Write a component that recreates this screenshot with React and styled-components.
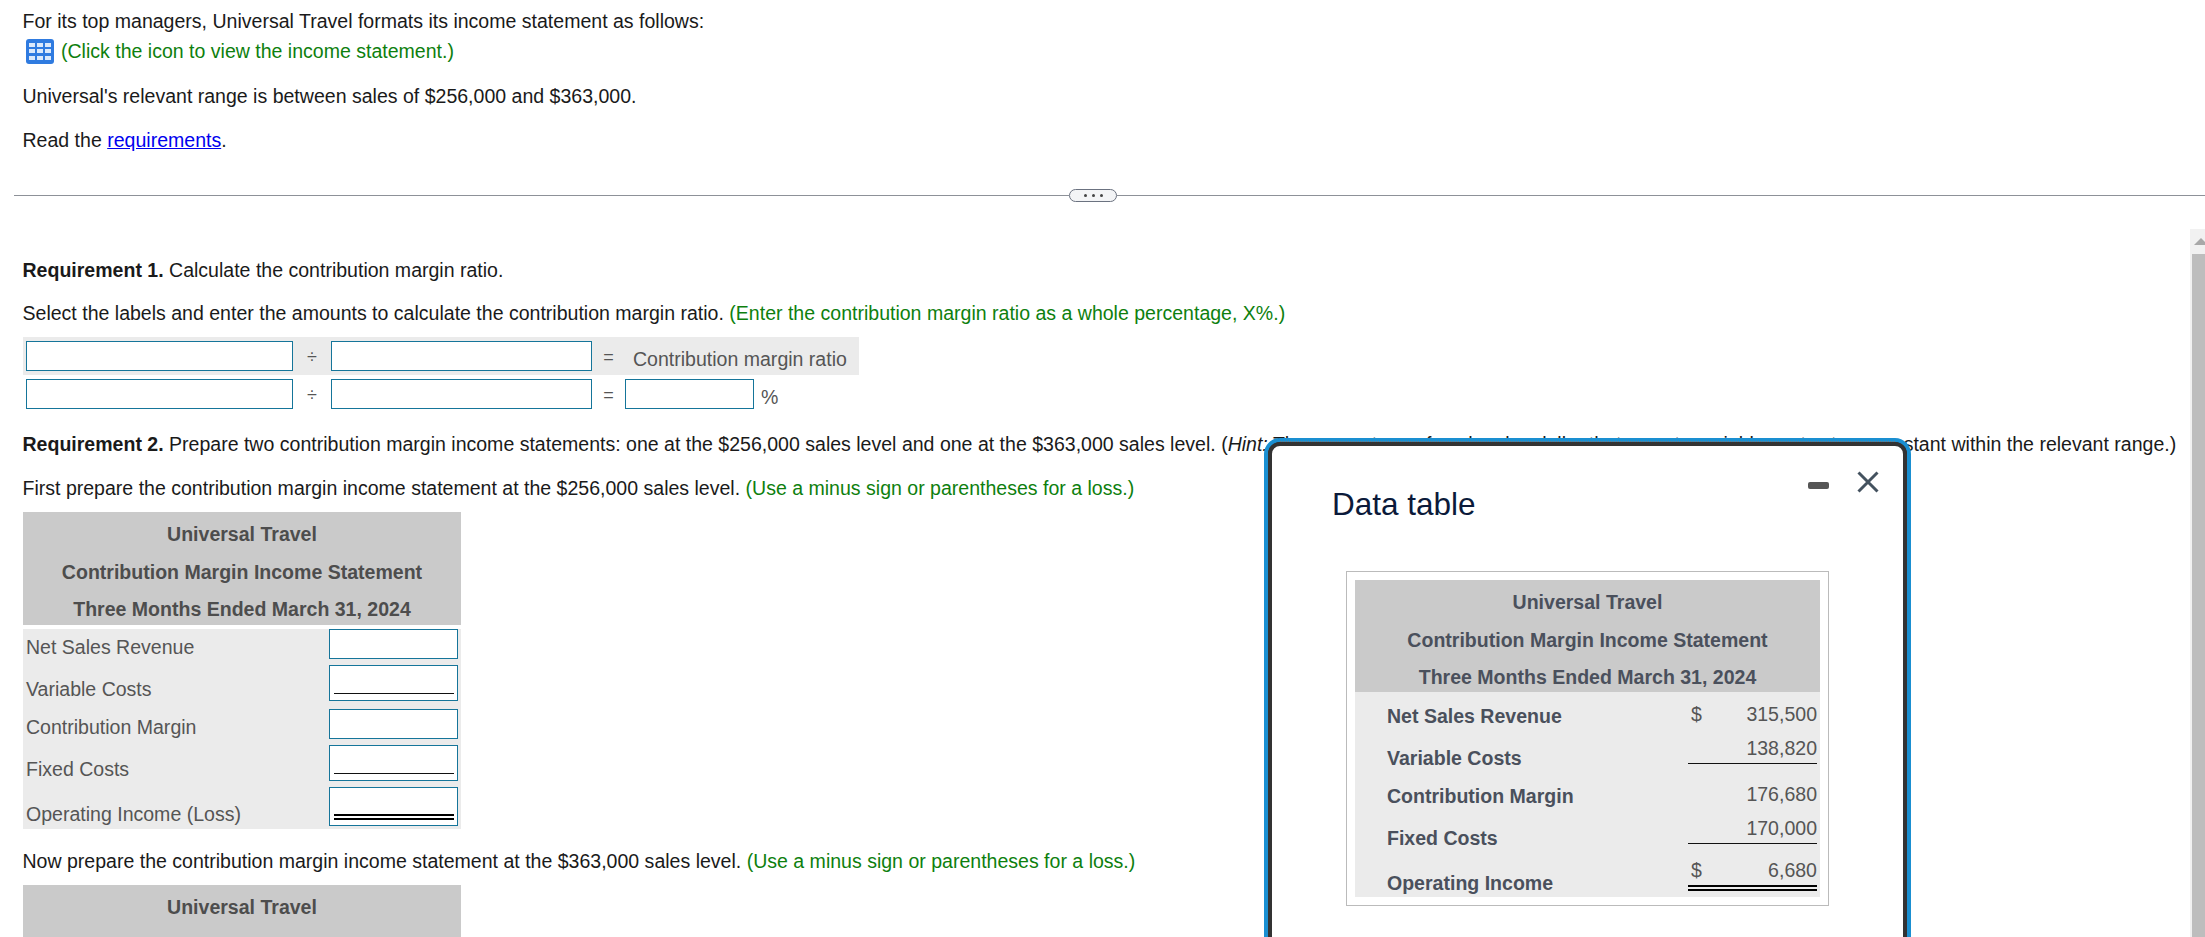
import React from 'react';
import styled, { createGlobalStyle } from 'styled-components';

const GlobalStyle = createGlobalStyle`
	html, body {
		margin: 0;
		padding: 0;
		background: #fff;
	}
	body {
		font-family: "Liberation Sans", Arial, sans-serif;
		font-size: 19.55px;
		color: #1a1a1a;
	}
`;

const Page = styled.div`
	position: relative;
	width: 2205px;
	height: 937px;
	overflow: hidden;
`;

const Intro = styled.section`
	padding: 6px 0 0 22.5px;
`;

const Line = styled.p`
	margin: ${(props) => props.$top || 0}px 0 0 ${(props) => props.$left || 0}px;
	line-height: 30px;
	white-space: nowrap;
`;

const IconLine = styled(Line)`
	display: flex;
	align-items: center;
	gap: 7px;
	padding-left: 3.5px;
`;

const Hint = styled.span`
	color: #0e7f0e;
`;

const Link = styled.a`
	color: #0000ee;
	text-decoration: underline;
`;

const Divider = styled.div`
	display: flex;
	align-items: center;
	height: 13px;
	margin: 34px 0 27px 14px;
`;

const DividerLine = styled.div`
	flex: ${(props) => (props.$w ? 'none' : 1)};
	width: ${(props) => props.$w || 0}px;
	height: 1px;
	background: #8d9198;
`;

const Pill = styled.div`
	display: flex;
	align-items: center;
	justify-content: center;
	gap: 5px;
	width: 48px;
	height: 13px;
	box-sizing: border-box;
	background: #f3f4f6;
	border: 1px solid #6b7280;
	border-radius: 7px;
`;

const Dot = styled.span`
	width: 3px;
	height: 3px;
	border-radius: 50%;
	background: #444;
`;

const Pane = styled.div`
	display: flex;
	height: 708px;
`;

const Content = styled.main`
	flex: 1;
	min-width: 0;
	padding: 26px 0 0 22.5px;
	overflow: hidden;
`;

const ScrollBar = styled.div`
	display: flex;
	flex-direction: column;
	align-items: flex-end;
	width: 15px;
	background: #f1f1f1;
`;

const ScrollArrow = styled.div`
	display: flex;
	justify-content: center;
	width: 13px;
	height: 25px;
	padding-top: 9px;
	box-sizing: border-box;
`;

const ScrollThumb = styled.div`
	flex: 1;
	width: 13px;
	background: #bdbdbd;
`;

const Formula = styled.div`
	display: flex;
	align-items: center;
	width: ${(props) => (props.$shade ? '836px' : 'auto')};
	height: ${(props) => (props.$shade ? 38 : 30)}px;
	margin: ${(props) => props.$top || 0}px 0 0 0.5px;
	padding-left: 3px;
	box-sizing: border-box;
	background: ${(props) => (props.$shade ? '#ebebeb' : 'transparent')};
`;

const Field = styled.div`
	display: flex;
	align-items: flex-end;
	flex: none;
	width: ${(props) => props.$w}px;
	height: ${(props) => props.$h || 30}px;
	box-sizing: border-box;
	padding: 0 3px ${(props) => (props.$double ? 5 : 6)}px 4px;
	background: #fff;
	border: 1px solid #15759a;
`;

const FieldRule = styled.div`
	flex: 1;
	border-bottom: ${(props) => (props.$double ? '6px double #000' : '1px solid #111')};
`;

const Operator = styled.span`
	flex: none;
	width: ${(props) => props.$w}px;
	padding-top: 3px;
	text-align: center;
	font-size: 18px;
	color: #555;
`;

const FormulaText = styled.span`
	margin-left: ${(props) => props.$left}px;
	padding-top: 6px;
	color: #555;
	white-space: nowrap;
`;

const Table = styled.div`
	width: 438px;
	margin: 9px 0 0 0.5px;
`;

const TableHead = styled.div`
	height: ${(props) => props.$h || 113}px;
	padding-top: 4px;
	box-sizing: border-box;
	background: #cacaca;
	color: ${(props) => props.$color || '#4d4d4d'};
	font-weight: 700;
	text-align: center;
	line-height: 37.5px;
`;

const TableBody = styled.div`
	padding: 0 3px 3px;
	background: #ebebeb;
`;

const TableRow = styled.div`
	display: flex;
	align-items: flex-end;
	justify-content: space-between;
	margin-top: ${(props) => props.$top}px;
`;

const RowLabel = styled.span`
	line-height: 24px;
	color: #555;
`;

const Modal = styled.aside`
	position: absolute;
	left: 1264px;
	top: 438px;
	width: 647px;
	height: 560px;
	box-sizing: border-box;
	border: 4px solid #1a8fd1;
	border-radius: 16px;
	background: #333;
`;

const ModalInner = styled.div`
	position: relative;
	height: 100%;
	box-sizing: border-box;
	border: 4px solid #333;
	border-radius: 12px;
	background: #fff;
	padding: 0 0 0 61px;

	&::before {
		content: '';
		position: absolute;
		top: -5px;
		left: 8px;
		right: 8px;
		border-top: 1px dotted #777;
	}
`;

const ModalBar = styled.header`
	display: flex;
	justify-content: space-between;
	align-items: flex-start;
	padding-right: 24px;
	height: 125px;
`;

const ModalTitle = styled.h2`
	margin: 38px 0 0 -1px;
	font-size: 31.5px;
	font-weight: 400;
	line-height: 40px;
	color: #0b1a3a;
`;

const ModalControls = styled.div`
	display: flex;
	align-items: center;
	gap: 28px;
	margin-top: 25px;
`;

const Minimize = styled.div`
	width: 21px;
	height: 7px;
	margin-top: 6px;
	border-radius: 2px;
	background: #555;
`;

const DataFrame = styled.div`
	width: 483px;
	margin-left: 13px;
	padding: 8px;
	box-sizing: border-box;
	border: 1px solid #bbb;
`;

const DataBody = styled.div`
	padding: 0 3px 2px 32px;
	background: #ebebeb;
`;

const DataRow = styled.div`
	display: flex;
	align-items: flex-end;
	justify-content: space-between;
	height: ${(props) => props.$h}px;
`;

const DataLabel = styled.span`
	line-height: 24px;
	font-weight: 700;
	color: #4a505c;
`;

const Figure = styled.div`
	display: flex;
	justify-content: space-between;
	width: 129px;
	box-sizing: border-box;
	margin-bottom: ${(props) => props.$lift}px;
	padding-left: 3px;
	padding-bottom: ${(props) => (props.$rule ? 3 : 0)}px;
	line-height: 24px;
	color: #555;
	border-bottom: ${(props) =>
		props.$rule === 'double' ? '6px double #000' : props.$rule === 'single' ? '1px solid #111' : 'none'};
`;

const incomeRows = [
	{ label: 'Net Sales Revenue', top: 4, h: 30 },
	{ label: 'Variable Costs', top: 6, h: 36, rule: true },
	{ label: 'Contribution Margin', top: 8, h: 30 },
	{ label: 'Fixed Costs', top: 6, h: 36, rule: true },
	{ label: 'Operating Income (Loss)', top: 6, h: 39, rule: true, double: true },
];

const dataRows = [
	{ label: 'Net Sales Revenue', h: 36, lift: 2, sign: '$', value: '315,500' },
	{ label: 'Variable Costs', h: 42, lift: 6, value: '138,820', rule: 'single' },
	{ label: 'Contribution Margin', h: 38, lift: 2, value: '176,680' },
	{ label: 'Fixed Costs', h: 42, lift: 6, value: '170,000', rule: 'single' },
	{ label: 'Operating Income', h: 45, lift: 4, sign: '$', value: '6,680', rule: 'double' },
];

const GridIcon = () => (
	<svg width="28" height="25" viewBox="0 0 28 25">
		<rect width="28" height="25" rx="3" fill="#2f7be0" />
		{[4, 10, 17].map((y) =>
			[3, 11, 19].map((x) => <rect key={`${x}-${y}`} x={x} y={y} width="6" height="4" fill="#dbe9fb" />)
		)}
	</svg>
);

const CloseIcon = () => (
	<svg width="22" height="22" viewBox="0 0 22 22">
		<path d="M1.5 1.5 L20.5 20.5 M20.5 1.5 L1.5 20.5" stroke="#44525f" strokeWidth="3" fill="none" />
	</svg>
);

const App = () => {
	return (
		<Page>
			<GlobalStyle />
			<Intro>
				<Line>For its top managers, Universal Travel formats its income statement as follows:</Line>
				<IconLine>
					<GridIcon />
					<Hint>(Click the icon to view the income statement.)</Hint>
				</IconLine>
				<Line $top={15}>Universal's relevant range is between sales of $256,000 and $363,000.</Line>
				<Line $top={14}>
					Read the <Link href="#requirements">requirements</Link>.
				</Line>
			</Intro>
			<Divider>
				<DividerLine $w={1055} />
				<Pill>
					<Dot />
					<Dot />
					<Dot />
				</Pill>
				<DividerLine />
			</Divider>
			<Pane>
				<Content>
					<Line>
						<b>Requirement 1.</b> Calculate the contribution margin ratio.
					</Line>
					<Line $top={13}>
						Select the labels and enter the amounts to calculate the contribution margin ratio.{' '}
						<Hint>(Enter the contribution margin ratio as a whole percentage, X%.)</Hint>
					</Line>
					<Formula $shade $top={9}>
						<Field $w={267} />
						<Operator $w={38}>÷</Operator>
						<Field $w={261} />
						<Operator $w={33}>=</Operator>
						<FormulaText $left={8}>Contribution margin ratio</FormulaText>
					</Formula>
					<Formula $top={4}>
						<Field $w={267} />
						<Operator $w={38}>÷</Operator>
						<Field $w={261} />
						<Operator $w={33}>=</Operator>
						<Field $w={129} />
						<FormulaText $left={7}>%</FormulaText>
					</Formula>
					<Line $top={20}>
						<b>Requirement 2.</b> Prepare two contribution margin income statements: one at the $256,000 sales
						level and one at the $363,000 sales level. (<i>Hint:</i> The percentage of each sales dollar that
						goes to variable costs stays constant within the relevant range.)
					</Line>
					<Line $top={14}>
						First prepare the contribution margin income statement at the $256,000 sales level.{' '}
						<Hint>(Use a minus sign or parentheses for a loss.)</Hint>
					</Line>
					<Table>
						<TableHead>
							<div>Universal Travel</div>
							<div>Contribution Margin Income Statement</div>
							<div>Three Months Ended March 31, 2024</div>
						</TableHead>
						<TableBody>
							{incomeRows.map((row) => (
								<TableRow key={row.label} $top={row.top}>
									<RowLabel>{row.label}</RowLabel>
									<Field $w={129} $h={row.h} $double={row.double}>
										{row.rule && <FieldRule $double={row.double} />}
									</Field>
								</TableRow>
							))}
						</TableBody>
					</Table>
					<Line $top={17}>
						Now prepare the contribution margin income statement at the $363,000 sales level.{' '}
						<Hint>(Use a minus sign or parentheses for a loss.)</Hint>
					</Line>
					<Table>
						<TableHead>
							<div>Universal Travel</div>
						</TableHead>
					</Table>
				</Content>
				<ScrollBar>
					<ScrollArrow>
						<svg width="13" height="8" viewBox="0 0 13 8">
							<path d="M9 0 L16 7 L2 7 Z" fill="#a8a8a8" />
						</svg>
					</ScrollArrow>
					<ScrollThumb />
				</ScrollBar>
			</Pane>
			<Modal>
				<ModalInner>
					<ModalBar>
						<ModalTitle>Data table</ModalTitle>
						<ModalControls>
							<Minimize />
							<CloseIcon />
						</ModalControls>
					</ModalBar>
					<DataFrame>
						<TableHead $h={112} $color="#4a505c">
							<div>Universal Travel</div>
							<div>Contribution Margin Income Statement</div>
							<div>Three Months Ended March 31, 2024</div>
						</TableHead>
						<DataBody>
							{dataRows.map((row) => (
								<DataRow key={row.label} $h={row.h}>
									<DataLabel>{row.label}</DataLabel>
									<Figure $lift={row.lift} $rule={row.rule}>
										<span>{row.sign}</span>
										<span>{row.value}</span>
									</Figure>
								</DataRow>
							))}
						</DataBody>
					</DataFrame>
				</ModalInner>
			</Modal>
		</Page>
	);
};

export default App;
